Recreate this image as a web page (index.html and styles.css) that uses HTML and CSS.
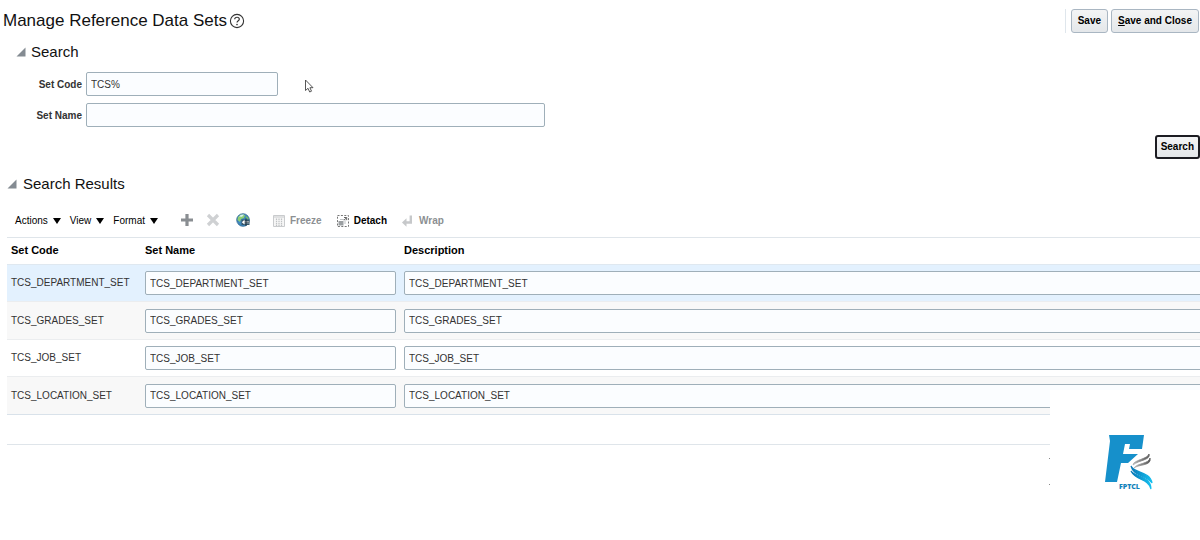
FILE: index.html
```html
<!DOCTYPE html>
<html lang="en">
<head>
<meta charset="utf-8">
<title>Manage Reference Data Sets</title>
<link rel="stylesheet" href="styles.css">
</head>
<body>
<header class="page-header">
  <h1 class="page-title">Manage Reference Data Sets</h1>
  <svg class="help" viewBox="0 0 16 16" width="16" height="16" role="img" aria-label="Help"><circle cx="8" cy="8" r="6.6" fill="none" stroke="#333" stroke-width="1.1"/><path d="M5.7 6.3C5.8 3.5 10.3 3.6 10.3 6.2C10.3 7.7 8 7.8 8 9.6" fill="none" stroke="#333" stroke-width="1.2"/><circle cx="8" cy="11.6" r=".8" fill="#333"/></svg>
  <div class="page-actions">
    <button class="btn" type="button">Save</button>
    <button class="btn" type="button"><u>S</u>ave and Close</button>
  </div>
</header>
<main>
  <form class="search">
    <h2 class="section-title search-title"><svg viewBox="0 0 10 10" width="10" height="10"><path d="M9.5 .5V9.5H.5Z" fill="#848b92"/></svg>Search</h2>
    <div class="fields">
      <label for="code">Set Code</label>
      <input class="text-box code-box" id="code" type="text" value="TCS%">
      <label for="name">Set Name</label>
      <input class="text-box name-box" id="name" type="text">
    </div>
    <div class="search-actions"><button class="btn btn-focus" type="button">Search</button></div>
  </form>
  <section class="results">
    <h2 class="section-title results-title"><svg viewBox="0 0 10 10" width="10" height="10"><path d="M9.5 .5V9.5H.5Z" fill="#848b92"/></svg>Search Results</h2>
    <div class="toolbar">
      <div class="menus">
        <button class="tool" type="button">Actions<span class="caret"></span></button>
        <button class="tool" type="button">View<span class="caret"></span></button>
        <button class="tool" type="button">Format<span class="caret"></span></button>
      </div>
      <div class="icons">
        <button class="tool" type="button" aria-label="Add"><svg viewBox="0 0 14 14" width="14" height="14"><path d="M7 1V13M1 7H13" stroke="#8a8e92" stroke-width="3.2"/></svg></button>
        <button class="tool" type="button" aria-label="Delete" disabled><svg viewBox="0 0 14 14" width="14" height="14"><path d="M2 2L12 12M12 2L2 12" stroke="#cfd1d3" stroke-width="3.2"/></svg></button>
        <button class="tool" type="button" aria-label="Translate"><svg viewBox="0 0 14 14" width="14" height="14"><circle cx="7" cy="7" r="6.3" fill="#3f87bd" stroke="#316890" stroke-width=".8"/><path d="M2 4L5 1.5L9 2L8 5L5 6L4 9L1.5 7Z" fill="#8fcf74"/><path d="M9.5 2.5L12.5 5V7L10 5Z" fill="#75b966"/><path d="M3 3.5Q5 1 8 1.6L6 3.8Z" fill="#d9f1f5"/><path d="M5.5 6.5H13.5V12H5.5Z" fill="#35566b"/><path d="M5.8 9.2L8.5 6.8V8.2H13V10.2H8.5V11.6Z" fill="#fff"/><path d="M10 5.5V13M8.5 9.2H13" stroke="#172a38" stroke-width=".9"/></svg></button>
      </div>
      <div class="modes">
        <button class="tool strong" type="button" disabled><svg viewBox="0 0 14 14" width="14" height="14"><path d="M1.5 1.5H12.5V12.5H1.5Z" fill="#f6f6f6" stroke="#c9cbcd"/><path d="M1.5 3H12.5" stroke="#c9cbcd"/><path d="M4.5 4.5V12M7 4.5V12M9.5 4.5V12" stroke="#bfc2c4" stroke-width="1.2" stroke-dasharray="1.5 .7"/></svg>Freeze</button>
        <button class="tool strong" type="button"><svg viewBox="0 0 14 14" width="14" height="14"><path d="M1.5 1.5H12.5V12.5H1.5Z" fill="none" stroke="#777" stroke-dasharray="2 1.4"/><path d="M2.5 7H7.5V11.5H2.5Z" fill="#9b9fa2"/><path d="M4 5.5H9V10" fill="none" stroke="#c0c3c5"/><path d="M8 3.5H10.7V6.2M10.5 3.7L8 6.2" fill="none" stroke="#666"/></svg>Detach</button>
        <button class="tool strong" type="button" disabled><svg viewBox="0 0 14 14" width="14" height="14"><path d="M9.8 1.5V8.5H5" fill="none" stroke="#c6c8ca" stroke-width="2.4"/><path d="M1 8.5L5.5 4.2V12.8Z" fill="#c6c8ca"/></svg>Wrap</button>
      </div>
    </div>
    <div class="table-wrap">
      <table class="grid">
        <colgroup><col class="col-code"><col class="col-name"><col></colgroup>
        <thead><tr><th>Set Code</th><th>Set Name</th><th>Description</th></tr></thead>
        <tbody>
          <tr class="selected"><td>TCS_DEPARTMENT_SET</td><td><input class="text-box" type="text" aria-label="Set Name" value="TCS_DEPARTMENT_SET"></td><td><input class="text-box" type="text" aria-label="Description" value="TCS_DEPARTMENT_SET"></td></tr>
          <tr class="alt"><td>TCS_GRADES_SET</td><td><input class="text-box" type="text" aria-label="Set Name" value="TCS_GRADES_SET"></td><td><input class="text-box" type="text" aria-label="Description" value="TCS_GRADES_SET"></td></tr>
          <tr><td>TCS_JOB_SET</td><td><input class="text-box" type="text" aria-label="Set Name" value="TCS_JOB_SET"></td><td><input class="text-box" type="text" aria-label="Description" value="TCS_JOB_SET"></td></tr>
          <tr class="alt"><td>TCS_LOCATION_SET</td><td><input class="text-box" type="text" aria-label="Set Name" value="TCS_LOCATION_SET"></td><td><input class="text-box" type="text" aria-label="Description" value="TCS_LOCATION_SET"></td></tr>
        </tbody>
      </table>
    </div>
  </section>
</main>
<svg class="pointer" viewBox="0 0 10 14" width="10" height="14"><path d="M1.5 1V11.5L4 9.3L5.7 13L7.5 12.2L5.9 8.7H9Z" fill="#fff" stroke="#444" stroke-width=".9"/></svg>
<aside class="watermark">
  <svg viewBox="0 0 50 58" width="50" height="58" role="img" aria-label="FPTCL logo">
    <defs>
      <linearGradient id="silver"><stop offset="0" stop-color="#b5b5b5"/><stop offset="1" stop-color="#555"/></linearGradient>
      <linearGradient id="wave"><stop offset="0" stop-color="#0876b5"/><stop offset="1" stop-color="#13c0f0"/></linearGradient>
    </defs>
    <path d="M4 0H39L37 14H24L25 9H20L18 19H33L23 28H16L12 47H0L5 6Z" fill="#1690cb"/>
    <path d="M28 30C28 25 43 24 44 19C46 25 34 25 28 30Z" fill="url(#silver)" stroke="url(#silver)" stroke-width=".8"/>
    <path d="M29 33C32 28 44 29 45 23C47 31 34 29 29 33Z" fill="url(#silver)" stroke="url(#silver)" stroke-width=".8"/>
    <path d="M26 31C28 38 45 36 47 48C40 39 29 42 26 31Z" fill="url(#wave)" stroke="url(#wave)" stroke-width="1.2"/>
    <path d="M26 36C30 42 46 41 46 54C43 43 31 46 26 36Z" fill="url(#wave)" stroke="url(#wave)" stroke-width="1.2"/>
    <text x="14" y="54" class="logo-name">FPTCL</text>
  </svg>
</aside>
</body>
</html>
```
FILE: styles.css
```css
* { box-sizing: border-box; }
body {
  margin: 0;
  position: relative;
  min-height: 100vh;
  overflow-x: hidden;
  background: #fff;
  color: #333;
  font: 10px/14px "Liberation Sans", Arial, sans-serif;
}
button, input { font: inherit; color: inherit; }
svg { flex: none; display: block; }

.page-header { display: flex; align-items: center; padding: 9px 1px 0 3px; }
.page-title { margin: 0; font-size: 17px; line-height: 22px; font-weight: 400; color: #111; }
.help { margin-left: 2px; }
.page-actions { display: flex; gap: 3px; margin-left: auto; padding-left: 5px; border-left: 1px solid #dfe6ec; }

.btn {
  height: 24px;
  padding: 0 6px;
  border: 1px solid #a9b6c2;
  border-radius: 3px;
  background: linear-gradient(#f3f4f5, #e4e7ea);
  color: #000;
  font-weight: 700;
}
.btn-focus { padding: 0 4px; border: 2px solid #1c1c22; }

.section-title {
  display: flex;
  align-items: center;
  gap: 5px;
  margin: 0;
  color: #111;
  font-size: 15px;
  line-height: 18px;
  font-weight: 400;
}
.search-title { padding: 10px 0 11px 16px; }
.results-title { gap: 6px; }
.fields {
  display: grid;
  grid-template-columns: 82px minmax(0, 1fr);
  gap: 7px 4px;
  align-items: center;
}
.fields label { padding-top: 2px; text-align: right; font-weight: 700; }
.text-box {
  display: block;
  width: 100%;
  height: 24px;
  padding: 0 4px;
  border: 1px solid #9fafb9;
  border-radius: 2px;
  background: #fbfdff;
}
.code-box { max-width: 192px; }
.name-box { max-width: 459px; }
.search-actions { display: flex; justify-content: flex-end; padding-top: 8px; }

.results { padding: 16px 0 0 7px; }
.toolbar { display: flex; align-items: center; height: 24px; margin: 15px 0 5px 8px; }
.menus, .icons, .modes { display: flex; align-items: center; }
.menus { gap: 9px; }
.icons { gap: 12px; margin-left: 22px; }
.icons .tool:last-child { margin-left: 4px; }
.modes { gap: 14px; margin-left: 22px; }
.tool {
  display: flex;
  align-items: center;
  gap: 4px;
  padding: 0;
  border: 0;
  background: none;
  color: #000;
}
.menus .tool { gap: 5px; }
.menus .tool, .strong { padding-top: 1px; }
.strong { font-weight: 700; }
.tool:disabled { color: #8c8f92; }
.caret { border: 4px solid transparent; border-top: 6px solid #000; border-bottom: 0; }

.table-wrap { overflow: hidden; border: solid #dfe5ea; border-width: 1px 0; padding-bottom: 29px; }
.grid {
  width: calc(100% + 12px);
  table-layout: fixed;
  border-collapse: separate;
  border-spacing: 0;
}
.col-code { width: 134px; }
.col-name { width: 259px; }
.grid th {
  height: 27px;
  padding: 0 4px 2px;
  text-align: left;
  font-size: 11px;
  color: #000;
  border-bottom: 1px solid #dfe8f0;
}
.grid td { height: 38px; padding: 0 4px; border-bottom: 1px solid #ebedef; }
.grid tr:nth-child(odd) td { height: 37px; }
.grid tr:last-child td { border-bottom-color: #d9e2ea; }
.selected td { background: #e3f1fe; }
.alt td { background: #f8f8f8; }

.pointer { position: absolute; left: 304px; top: 79px; }
.watermark {
  position: absolute;
  right: 0;
  top: 390px;
  bottom: 0;
  width: 150px;
  padding: 45px 0 0 55px;
  background: #fff;
}
.watermark::before, .watermark::after {
  content: "";
  position: absolute;
  left: -1px;
  top: 68px;
  width: 1px;
  height: 1px;
  background: #888;
}
.watermark::after { top: 94px; }
.logo-name { font: 800 7px "Open Sans", sans-serif; fill: #1282bb; }
```
